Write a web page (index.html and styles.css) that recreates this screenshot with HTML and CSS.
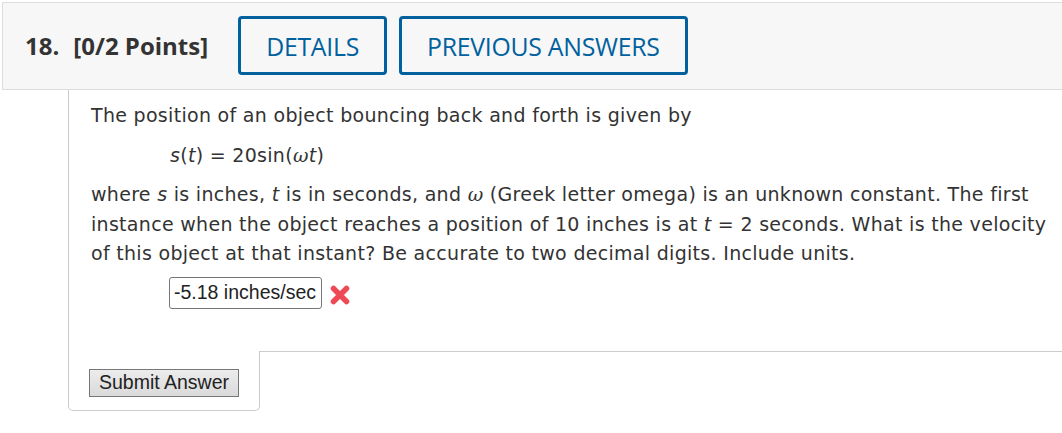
FILE: index.html
```html
<!DOCTYPE html>
<html>
<head>
<meta charset="utf-8">
<link rel="stylesheet" href="styles.css">
</head>
<body>
<div class="page">
  <div class="qhead">
    <div class="qtitle"><span class="qnum">18.</span><span class="qpts">[0/2 Points]</span></div>
    <button class="hbtn">DETAILS</button>
    <button class="hbtn">PREVIOUS ANSWERS</button>
  </div>
  <div class="qbody">
    <p class="line">The position of an object bouncing back and forth is given by</p>
    <p class="line eq"><i>s</i>(<i>t</i>) = 20sin(<i class="om">ω</i><i>t</i>)</p>
    <p class="line">where <i>s</i> is inches, <i>t</i> is in seconds, and <i class="om">ω</i> (Greek letter omega) is an unknown constant. The first instance when the object reaches a position of 10 inches is at <i>t</i> = 2 seconds. What is the velocity of this object at that instant? Be accurate to two decimal digits. Include units.</p>
    <div class="answer">
      <input class="ans" type="text" value="-5.18 inches/sec">
      <svg class="wrong" width="20" height="20" viewBox="0 0 20 20"><path d="M3.5 3.5 L16.5 16.5 M16.5 3.5 L3.5 16.5" stroke="#ee4a55" stroke-width="5.5" stroke-linecap="round" fill="none"/></svg>
    </div>
  </div>
  <div class="qfoot">
    <div class="subcell"><button class="submit">Submit Answer</button></div>
    <div class="filler"></div>
  </div>
</div>
</body>
</html>
```
FILE: styles.css
```css
html, body {
  margin: 0;
  padding: 0;
  background: #fff;
  overflow: hidden;
}
.page {
  padding: 2px 0 0 2px;
  width: 1100px;
}
.qhead {
  display: flex;
  align-items: center;
  background: #f7f7f7;
  border: 1px solid #dddddd;
  border-right: none;
  padding: 13px 0 14px 22px;
  height: 59px;
}
.qtitle {
  font-family: "Open Sans", sans-serif;
  font-weight: 700;
  font-size: 24px;
  color: #333333;
  margin-right: 30px;
}
.qnum {
  margin-right: 14px;
}
.hbtn {
  font-family: "Open Sans", sans-serif;
  font-size: 24.8px;
  color: #00619e;
  background: transparent;
  border: 3px solid #00619e;
  border-radius: 4px;
  height: 59px;
  padding: 0 25px;
  margin-right: 12px;
  letter-spacing: -0.25px;
}
.qbody {
  margin-left: 66px;
  width: 962px;
  border-left: 1px solid #cccccc;
  padding: 11px 12px 42px 22px;
  font-family: "DejaVu Sans", Verdana, sans-serif;
  font-size: 19px;
  letter-spacing: 0.3px;
  color: #333333;
}
.line {
  margin: 0 0 10px;
  line-height: 29.5px;
}
.eq {
  padding-left: 79px;
  height: 29.5px;
}
.om {
  font-family: "DejaVu Serif", serif;
  line-height: 1;
}
.answer {
  display: flex;
  align-items: center;
  padding-left: 78px;
  height: 32px;
  margin-top: -2px;
}
.ans {
  font-family: "Liberation Sans", Arial, sans-serif;
  font-size: 19.5px;
  letter-spacing: 0;
  color: #222222;
  width: 153px;
  height: 32px;
  box-sizing: border-box;
  border: 1px solid #767676;
  border-radius: 3px;
  padding: 0 4px;
  margin: 0;
}
.wrong {
  margin-left: 8px;
  margin-top: 5px;
}
.qfoot {
  display: flex;
  margin-left: 66px;
}
.subcell {
  width: 192px;
  border-left: 1px solid #cccccc;
  border-right: 1px solid #cccccc;
  border-bottom: 1px solid #cccccc;
  border-radius: 0 0 5px 5px;
  padding: 18px 0 13px 20px;
  box-sizing: border-box;
}
.submit {
  font-family: "Liberation Sans", Arial, sans-serif;
  font-size: 19.5px;
  color: #222222;
  background: linear-gradient(#ececec, #dadada);
  border: 1px solid #777777;
  width: 150px;
  height: 28px;
  padding: 0;
  margin: 0;
  display: block;
}
.filler {
  flex: 1;
  border-top: 1px solid #cccccc;
}
```
